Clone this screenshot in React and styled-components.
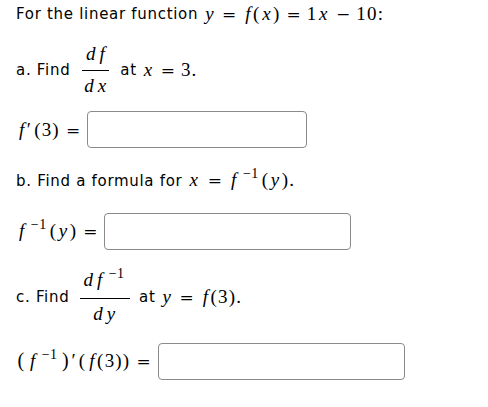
import React from "react";
import styled, { createGlobalStyle } from "styled-components";

const GlobalStyle = createGlobalStyle`
  body {
    margin: 0;
    background: #fff;
    font-family: "DejaVu Sans", Verdana, sans-serif;
    font-size: 15px;
    letter-spacing: 0.7px;
    color: #000;
  }
`;

function App() {
  return (
    <>
      <GlobalStyle />
      <Page>
        <Line $h={28}>
          For the linear function&nbsp;
          <M>
            <V>y</V>
            <Op>=</Op>
            <V $l={3}>f</V>(<V>x</V>)<Op>=</Op>1<V>x</V>
            <Op>−</Op>10:
          </M>
        </Line>

        <Line $h={66} $top={9}>
          a. Find&nbsp;
          <Frac>
            <Num>
              <V>d</V>
              <V>f</V>
            </Num>
            <Den>
              <V>d</V>
              <V>x</V>
            </Den>
          </Frac>
          &nbsp;at&nbsp;
          <M>
            <V>x</V>
            <Op>=</Op>3.
          </M>
        </Line>

        <AnswerRow $top={8}>
          <M>
            <V $l={3}>f</V>
            <Prime>′</Prime>(3)<Op $r={3}>=</Op>
          </M>
          <AnswerBox $w={220} />
        </AnswerRow>

        <Line $h={30} $top={18}>
          b. Find a formula for&nbsp;
          <M>
            <V $r={4}>x</V>
            <Op>=</Op>
            <V $l={3}>f</V>
            <Sup>−1</Sup>(<V>y</V>).
          </M>
        </Line>

        <AnswerRow $top={17}>
          <M>
            <V $l={3}>f</V>
            <Sup>−1</Sup>(<V>y</V>)<Op $r={3}>=</Op>
          </M>
          <AnswerBox $w={247} />
        </AnswerRow>

        <Line $h={66} $top={14}>
          c. Find&nbsp;
          <Frac>
            <Num>
              <V>d</V>
              <V>f</V>
              <Sup>−1</Sup>
            </Num>
            <Den>
              <V>d</V>
              <V>y</V>
            </Den>
          </Frac>
          &nbsp;at&nbsp;
          <M>
            <V>y</V>
            <Op>=</Op>
            <V $l={3}>f</V>(3).
          </M>
        </Line>

        <AnswerRow $top={13}>
          <M>
            <Delim>(</Delim>
            <V $l={3}>f</V>
            <Sup>−1</Sup>
            <Delim>)</Delim>
            <Prime>′</Prime>(<V $l={3}>f</V>(3))<Op $r={3}>=</Op>
          </M>
          <AnswerBox $w={247} />
        </AnswerRow>
      </Page>
    </>
  );
}

export default App;

const Page = styled.div`
  padding: 0 16px;
  width: 488px;
  box-sizing: border-box;
`;

const Line = styled.div`
  display: flex;
  align-items: center;
  height: ${(p) => p.$h}px;
  margin-top: ${(p) => p.$top || 0}px;
  white-space: nowrap;
`;

const M = styled.span`
  font-family: "Liberation Serif", "DejaVu Serif", serif;
  font-size: 19px;
  letter-spacing: 1.2px;
  display: inline-flex;
  align-items: baseline;
  line-height: 24px;
`;

const V = styled.i`
  font-style: italic;
  letter-spacing: 0;
  padding: 0 ${(p) => p.$r ?? 2.5}px 0 ${(p) => p.$l ?? 1.5}px;
`;

const Op = styled.span`
  font-family: "DejaVu Serif", serif;
  font-size: 17px;
  letter-spacing: 0;
  margin: 0 ${(p) => p.$r ?? 6}px 0 6px;
`;

const Delim = styled.span`
  font-size: 20px;
  margin: 0 1.5px;
`;

const Prime = styled.span`
  margin: 0 2px 0 0;
`;

const Sup = styled.span`
  font-size: 14px;
  letter-spacing: 0.5px;
  position: relative;
  top: -8px;
  margin: 0 3px 0 4px;
`;

const Frac = styled.span`
  display: inline-flex;
  flex-direction: column;
  align-items: center;
  font-family: "Liberation Serif", "DejaVu Serif", serif;
  font-size: 19px;
  letter-spacing: 0;
  margin: 0 4px 0 5px;
`;

const Num = styled.span`
  padding: 0 2px 5px;
  border-bottom: 1px solid #000;
  line-height: 22px;
`;

const Den = styled.span`
  padding: 4px 2px 0;
  line-height: 22px;
`;

const AnswerRow = styled.div`
  display: flex;
  align-items: center;
  gap: 4px;
  margin-top: ${(p) => p.$top || 0}px;
`;

const AnswerBox = styled.input`
  width: ${(p) => p.$w}px;
  height: 37px;
  box-sizing: border-box;
  border: 1px solid #8a8a8a;
  border-radius: 4px;
  background: #fff;
  outline: none;
`;
